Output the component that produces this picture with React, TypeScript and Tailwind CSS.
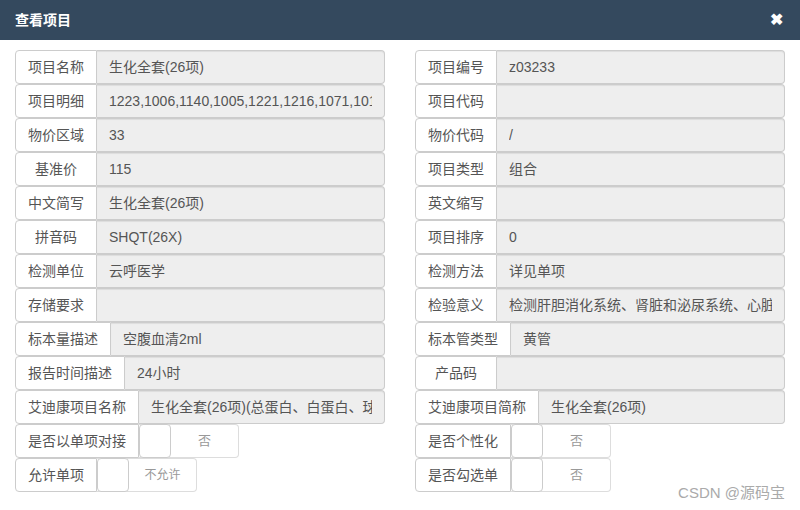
import React from "react";

type Field = { label: string; value?: string; toggle?: string };

const left: Field[] = [
  { label: "项目名称", value: "生化全套(26项)" },
  { label: "项目明细", value: "1223,1006,1140,1005,1221,1216,1071,1015" },
  { label: "物价区域", value: "33" },
  { label: "基准价", value: "115" },
  { label: "中文简写", value: "生化全套(26项)" },
  { label: "拼音码", value: "SHQT(26X)" },
  { label: "检测单位", value: "云呼医学" },
  { label: "存储要求", value: "" },
  { label: "标本量描述", value: "空腹血清2ml" },
  { label: "报告时间描述", value: "24小时" },
  { label: "艾迪康项目名称", value: "生化全套(26项)(总蛋白、白蛋白、球" },
  { label: "是否以单项对接", toggle: "否" },
  { label: "允许单项", toggle: "不允许" },
];

const right: Field[] = [
  { label: "项目编号", value: "z03233" },
  { label: "项目代码", value: "" },
  { label: "物价代码", value: "/" },
  { label: "项目类型", value: "组合" },
  { label: "英文缩写", value: "" },
  { label: "项目排序", value: "0" },
  { label: "检测方法", value: "详见单项" },
  { label: "检验意义", value: "检测肝胆消化系统、肾脏和泌尿系统、心脏" },
  { label: "标本管类型", value: "黄管" },
  { label: "产品码", value: "" },
  { label: "艾迪康项目简称", value: "生化全套(26项)" },
  { label: "是否个性化", toggle: "否" },
  { label: "是否勾选单", toggle: "否" },
];

function Row({ f }: { f: Field }) {
  return (
    <div className="flex h-[34px]">
      <div className="min-w-[82px] px-3 flex items-center justify-center bg-white border border-[#ccc] rounded-l-[4px] text-[14px] text-[#555] whitespace-nowrap shrink-0">
        {f.label}
      </div>
      {f.toggle !== undefined ? (
        <div className="flex w-[100px] border border-l-0 border-[#ddd] rounded-r-[4px]">
          <div className="w-[32px] bg-white border border-[#ccc] rounded-[4px] -my-px" />
          <div
            className={`flex-1 flex items-center justify-center text-[#999] ${
              f.toggle.length > 1 ? "text-[12px]" : "text-[13px]"
            }`}
          >
            {f.toggle}
          </div>
        </div>
      ) : (
        <div className="flex-1 min-w-0 flex items-center px-3 bg-[#eee] border border-l-0 border-[#ccc] rounded-r-[4px] shadow-[inset_0_1px_1px_rgba(0,0,0,0.075)] text-[14px] text-[#555]">
          <span className="block w-full overflow-hidden whitespace-nowrap">{f.value}</span>
        </div>
      )}
    </div>
  );
}

export default function App() {
  return (
    <div
      className="relative w-[800px] h-[510px] bg-white overflow-hidden"
      style={{ fontFamily: '"Liberation Sans", "Noto Sans CJK SC", sans-serif' }}
    >
      <div className="h-[40px] bg-[#34495e] flex items-center justify-between px-[15px]">
        <span className="text-white font-bold text-[14px]">查看项目</span>
        <span className="text-white font-bold text-[16px] leading-none mr-[2px]">✖</span>
      </div>
      <div className="grid grid-cols-2 gap-x-[30px] px-[15px] pt-[10px]">
        <div className="flex flex-col">
          {left.map((f) => (
            <Row key={f.label} f={f} />
          ))}
        </div>
        <div className="flex flex-col">
          {right.map((f) => (
            <Row key={f.label} f={f} />
          ))}
        </div>
      </div>
      <div className="absolute right-[15px] bottom-[6px] text-[15px] text-[#aaa]">CSDN @源码宝</div>
    </div>
  );
}
